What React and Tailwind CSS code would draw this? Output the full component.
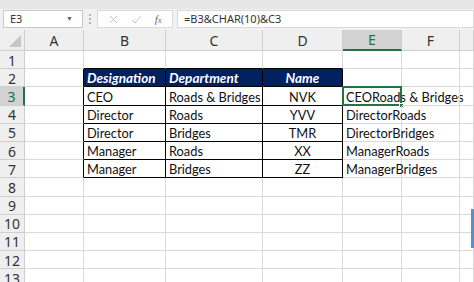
import React from "react";

const cols = ["A", "B", "C", "D", "E", "F", ""];
const colW = ["w-[59px]", "w-[82px]", "w-[97px]", "w-[80px]", "w-[59px]", "w-[58px]", "w-[14px]"];

const table = {
  3: ["CEO", "Roads & Bridges", "NVK", "CEORoads & Bridges"],
  4: ["Director", "Roads", "YVV", "DirectorRoads"],
  5: ["Director", "Bridges", "TMR", "DirectorBridges"],
  6: ["Manager", "Roads", "XX", "ManagerRoads"],
  7: ["Manager", "Bridges", "ZZ", "ManagerBridges"],
};

const rows = Array.from({ length: 13 }, (_, i) => i + 1);

function Cell({ r, c }) {
  const inTable = r >= 2 && r <= 7 && c >= 1 && c <= 3;
  const header = r === 2 && inTable;
  let border = "border-r border-b border-[#dadada]";
  if (inTable) border = "border-r border-b border-black";
  if (r === 1 && c >= 1 && c <= 3) border = "border-r border-b border-r-[#dadada] border-b-black";
  if (c === 0 && r >= 2 && r <= 7) border = "border-r border-b border-r-black border-b-[#dadada]";

  let text = null;
  let align = "justify-start pl-[3px]";
  if (header) {
    text = ["Designation", "Department", "Name"][c - 1];
    if (c === 3) align = "justify-center";
  } else if (table[r] && c >= 1 && c <= 4) {
    text = table[r][c - 1];
    if (c === 3) align = "justify-center";
  }

  return (
    <div
      className={`relative flex items-center h-full shrink-0 pt-[2px] ${colW[c]} ${border} ${align} ${
        header ? "bg-[#002060] text-white font-bold italic" : "text-[#111]"
      } whitespace-nowrap overflow-visible`}
    >
      {text && <span className={`${header ? "text-[13.5px]" : "text-[12.8px]"} leading-none`}>{text}</span>}
      {r === 3 && c === 4 && (
        <div className="absolute -left-px -top-px w-[60px] h-[20px] border-2 border-[#217346]">
          <div className="absolute -right-[4px] -bottom-[4px] w-[5px] h-[5px] bg-[#217346] border border-white" />
        </div>
      )}
    </div>
  );
}

export default function App() {
  return (
    <div className="w-[474px] h-[282px] overflow-hidden bg-white relative" style={{ fontFamily: "Lato, 'Noto Sans', sans-serif" }}>
      {/* Ribbon edge + formula bar */}
      <div className="h-[9px] bg-[#e6e6e6]" />
      <div className="h-[21px] bg-[#f1f1f1] flex items-start pt-px text-[11px] text-[#333]" style={{ fontFamily: "'Noto Sans', sans-serif" }}>
        <div className="ml-[3px] w-[80px] h-[18px] bg-white border border-[#c8c8c8] flex items-center pl-[6px] pr-[9px] justify-between">
          <span>E3</span>
          <span className="text-[7px] text-[#666]">▼</span>
        </div>
        <div className="w-[14px] h-[18px] flex flex-col items-center justify-center gap-[2px]">
          <span className="w-[2px] h-[2px] bg-[#b5b5b5]" />
          <span className="w-[2px] h-[2px] bg-[#b5b5b5]" />
          <span className="w-[2px] h-[2px] bg-[#b5b5b5]" />
        </div>
        <div className="w-[76px] h-[18px] bg-white border border-[#dadada] flex items-center justify-around px-1">
          <svg width="9" height="9" viewBox="0 0 9 9"><path d="M1 1L8 8M8 1L1 8" stroke="#c4c4c4" strokeWidth="1" /></svg>
          <svg width="11" height="9" viewBox="0 0 11 9"><path d="M1 5L4 8L10 1" stroke="#c4c4c4" strokeWidth="1" fill="none" /></svg>
          <span className="italic text-[#666] text-[11px]" style={{ fontFamily: "'Liberation Serif', serif" }}>f<span className="text-[8px]">x</span></span>
        </div>
        <div className="ml-[4px] flex-1 h-[18px] bg-white border border-[#dadada] flex items-center pl-[6px]">
          =B3&amp;CHAR(10)&amp;C3
        </div>
      </div>

      {/* Column headers */}
      <div className="flex h-[21px] bg-[#efefef] text-[14px] text-[#333]" style={{ fontFamily: "'Noto Sans', sans-serif" }}>
        <div className="w-[25px] h-full border-r border-b border-[#cfcfcf] relative shrink-0">
          <div className="absolute right-[3px] bottom-[3px] w-0 h-0 border-l-[12px] border-l-transparent border-b-[12px] border-b-[#c6c6c6]" />
        </div>
        {cols.map((c, i) => (
          <div
            key={i}
            className={`${colW[i]} shrink-0 h-full flex items-center justify-center border-r border-[#cfcfcf] ${
              c === "E" ? "bg-[#d2d2d2] border-b-2 border-b-[#217346] text-[#217346]" : "border-b"
            }`}
          >
            {c}
          </div>
        ))}
      </div>

      {/* Grid */}
      {rows.map((r) => (
        <div key={r} className="flex h-[18.2px]">
          <div
            className={`w-[25px] shrink-0 flex items-center justify-center pt-px text-[14px] border-b border-[#cfcfcf] ${
              r === 3 ? "bg-[#d2d2d2] text-[#217346] border-r-2 border-r-[#217346]" : "bg-[#efefef] text-[#333] border-r"
            }`}
            style={{ fontFamily: "'Noto Sans', sans-serif" }}
          >
            {r}
          </div>
          {cols.map((_, c) => (
            <Cell key={c} r={r} c={c} />
          ))}
        </div>
      ))}

      {/* scrollbar thumb */}
      <div className="absolute right-0 top-[209px] w-[3px] h-[39px] bg-[#5b8fc7]" />
    </div>
  );
}
